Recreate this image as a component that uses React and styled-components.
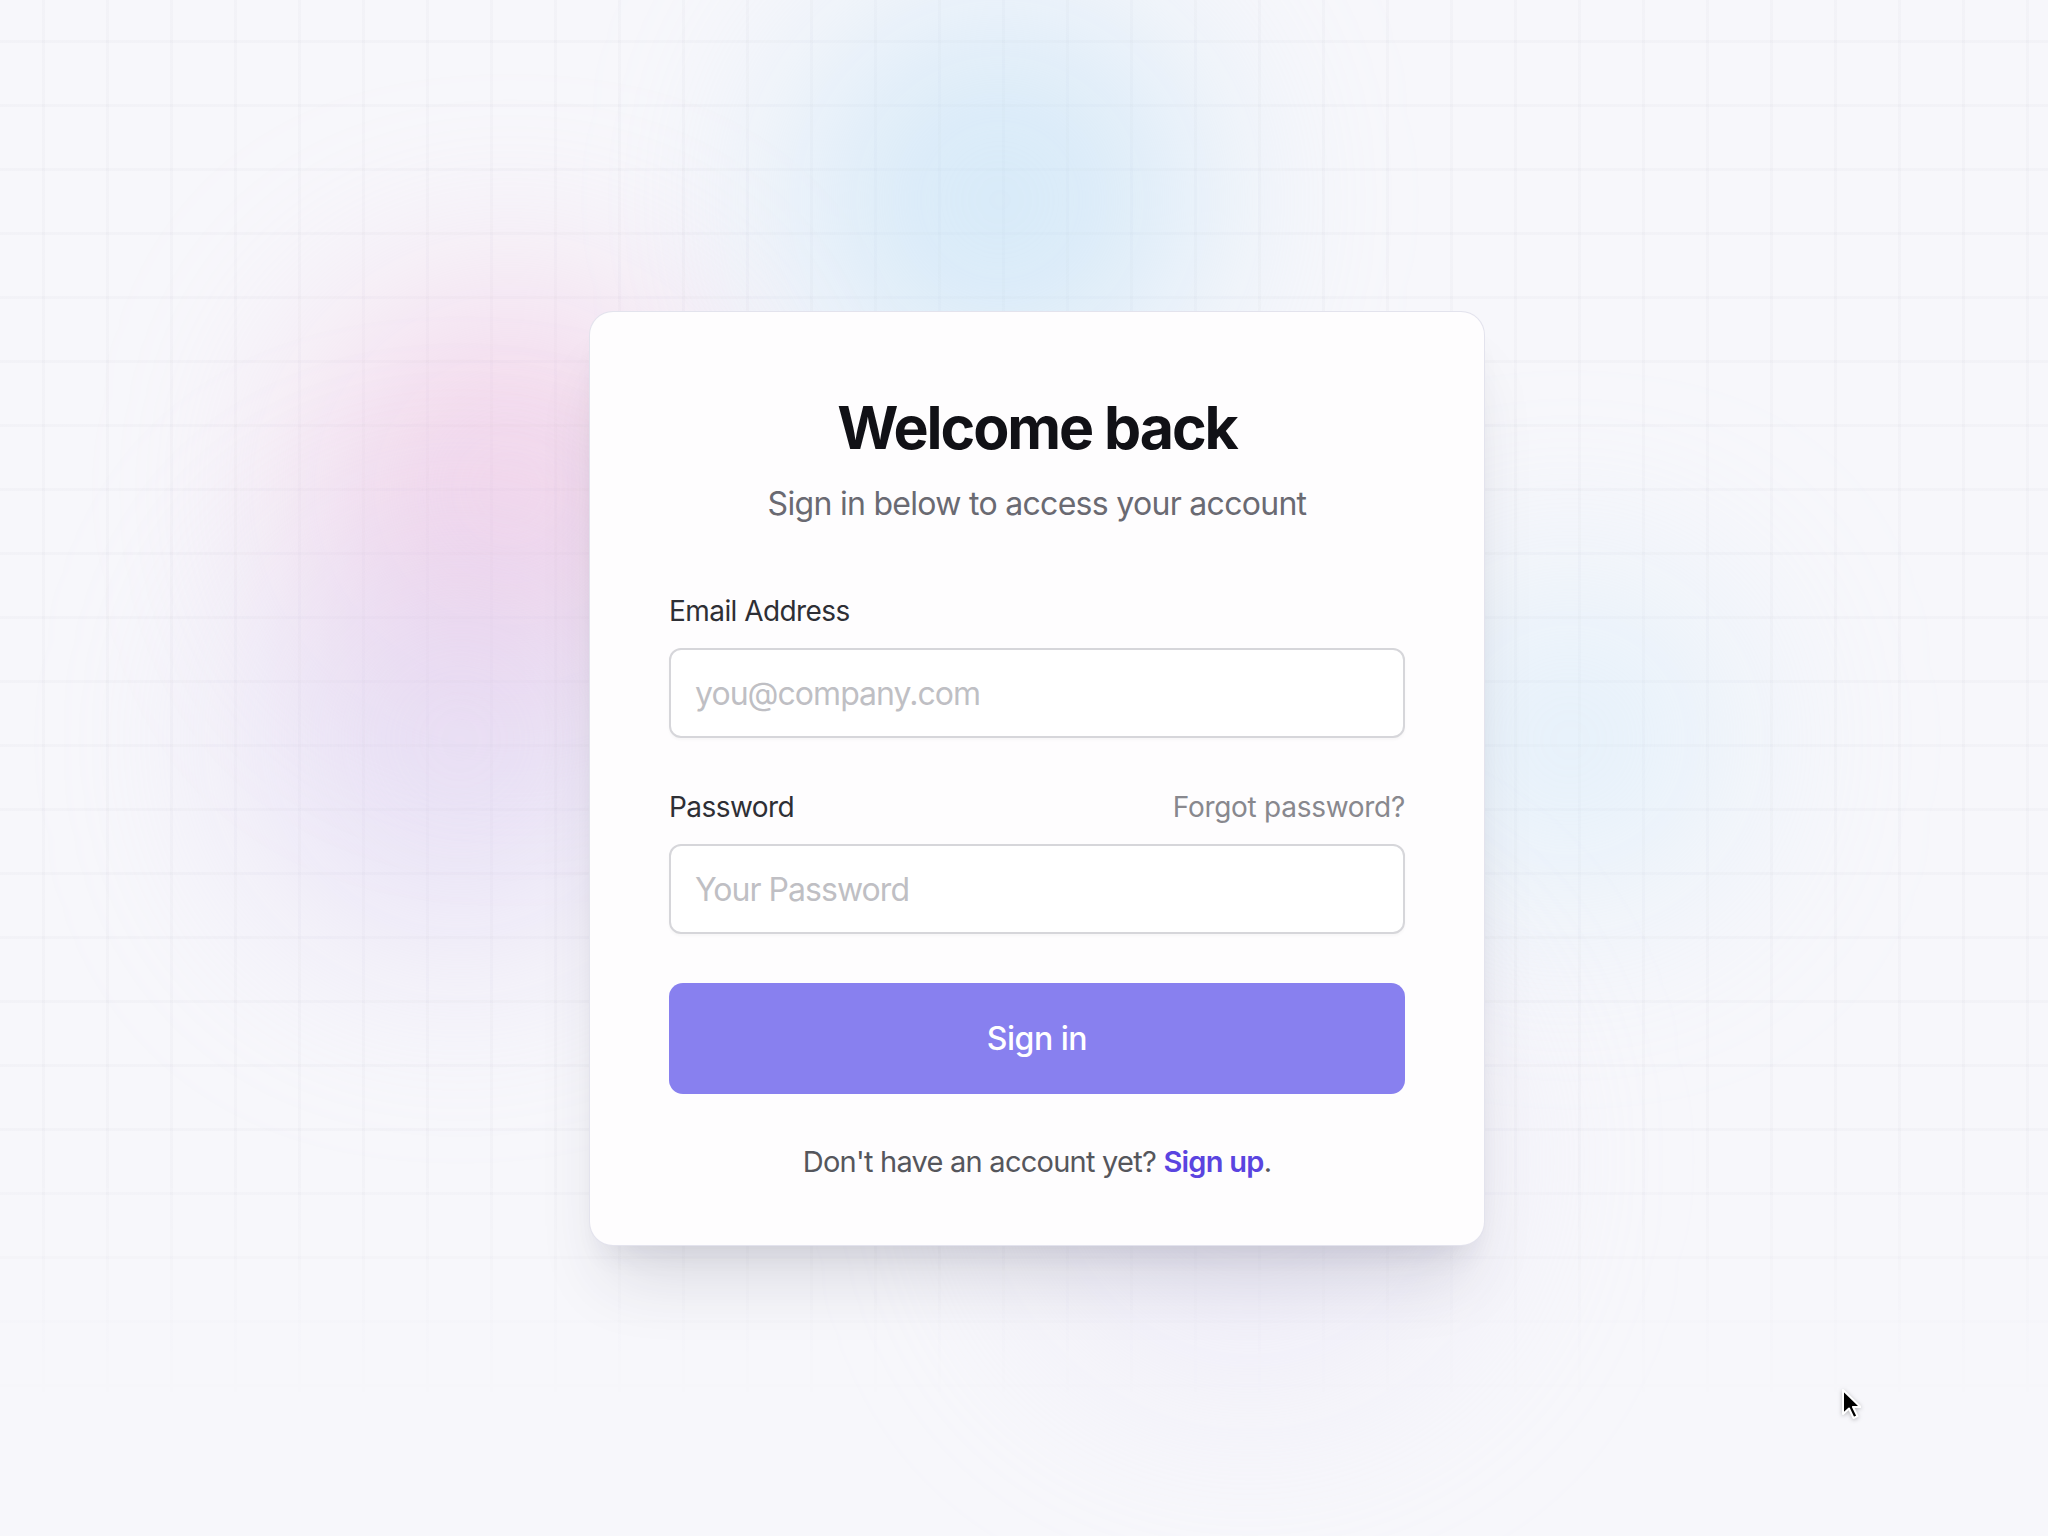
import React from "react";
import styled, { createGlobalStyle } from "styled-components";

const GlobalStyle = createGlobalStyle`
  html, body {
    margin: 0;
    padding: 0;
    background: #f7f7fb;
  }
  body {
    font-family: Inter, "Noto Sans", "Liberation Sans", sans-serif;
    -webkit-font-smoothing: antialiased;
  }
  * {
    box-sizing: border-box;
  }
`;

const App = () => {
  return (
    <>
      <GlobalStyle />
      <Page>
        <Backdrop>
          <Grid />
          <Blob $x={510} $y={490} $size={400} $color="rgba(240, 185, 220, 0.52)" />
          <Blob $x={460} $y={740} $size={420} $color="rgba(215, 200, 240, 0.45)" />
          <Blob $x={1000} $y={200} $size={400} $color="rgba(185, 222, 245, 0.55)" />
          <Blob $x={1570} $y={740} $size={320} $color="rgba(200, 230, 250, 0.42)" />
          <Blob $x={1250} $y={1160} $size={460} $color="rgba(228, 222, 246, 0.4)" />
        </Backdrop>

        <Card>
          <Header>
            <Title>Welcome back</Title>
            <Subtitle>Sign in below to access your account</Subtitle>
          </Header>

          <Form onSubmit={(e) => e.preventDefault()}>
            <Field>
              <LabelRow>
                <Label htmlFor="email">Email Address</Label>
              </LabelRow>
              <Input id="email" type="email" placeholder="you@company.com" />
            </Field>

            <Field>
              <LabelRow>
                <Label htmlFor="password">Password</Label>
                <Forgot href="#">Forgot password?</Forgot>
              </LabelRow>
              <Input id="password" type="password" placeholder="Your Password" />
            </Field>

            <SubmitButton type="submit">Sign in</SubmitButton>
          </Form>

          <Footer>
            Don't have an account yet? <SignUp href="#">Sign up</SignUp>.
          </Footer>
        </Card>

        <Cursor viewBox="0 0 20 32" width="20" height="32">
          <path
            d="M2 2 L2 26 L8 20.5 L12.5 30 L16.5 28.2 L12 19 L19.5 19 Z"
            fill="#000"
            stroke="#fff"
            strokeWidth="2"
            strokeLinejoin="round"
          />
        </Cursor>
      </Page>
    </>
  );
};

const Page = styled.main`
  position: relative;
  min-height: 100vh;
  display: flex;
  align-items: center;
  justify-content: center;
  padding: 21px 0 0 26px;
  overflow: hidden;
`;

const Backdrop = styled.div`
  position: absolute;
  inset: 0;
  pointer-events: none;
`;

const Grid = styled.div`
  position: absolute;
  inset: 0;
  background-image: linear-gradient(
      to right,
      rgba(60, 60, 90, 0.022) 3px,
      transparent 3px
    ),
    linear-gradient(to bottom, rgba(60, 60, 90, 0.022) 3px, transparent 3px);
  background-size: 64px 64px;
  background-position: 42px 40px;
  mask-image: linear-gradient(to bottom, #000 0%, #000 76%, transparent 92%);
`;

const Blob = styled.div`
  position: absolute;
  left: ${(p) => p.$x - p.$size / 2}px;
  top: ${(p) => p.$y - p.$size / 2}px;
  width: ${(p) => p.$size}px;
  height: ${(p) => p.$size}px;
  border-radius: 50%;
  background: ${(p) => p.$color};
  filter: blur(100px);
`;

const Card = styled.section`
  position: relative;
  width: 896px;
  background: #fefdfe;
  border-radius: 24px;
  border: 1px solid rgba(220, 220, 232, 0.8);
  padding: 80px 79px 63px;
  box-shadow: 0 50px 70px -20px rgba(40, 40, 70, 0.14),
    0 20px 30px -16px rgba(40, 40, 70, 0.1);
`;

const Header = styled.div`
  display: flex;
  flex-direction: column;
  align-items: center;
  gap: 12px;
`;

const Title = styled.h1`
  margin: 0;
  font-size: 59px;
  line-height: 72px;
  font-weight: 700;
  letter-spacing: -0.035em;
  color: #111116;
`;

const Subtitle = styled.p`
  margin: 0;
  font-size: 32px;
  line-height: 56px;
  letter-spacing: -0.022em;
  color: #6a6a72;
`;

const Form = styled.form`
  display: flex;
  flex-direction: column;
  gap: 49px;
  margin-top: 59px;
`;

const Field = styled.div`
  display: flex;
  flex-direction: column;
  gap: 17px;
`;

const LabelRow = styled.div`
  display: flex;
  align-items: center;
  justify-content: space-between;
  height: 40px;
`;

const Label = styled.label`
  font-size: 28px;
  font-weight: 400;
  letter-spacing: -0.02em;
  color: #2e2f35;
`;

const Forgot = styled.a`
  font-size: 28px;
  letter-spacing: -0.01em;
  color: #88888e;
  text-decoration: none;
`;

const Input = styled.input`
  width: 100%;
  height: 90px;
  padding: 0 24px;
  border: 2px solid #d6d6da;
  border-radius: 12px;
  background: #fff;
  font-family: inherit;
  font-size: 32px;
  letter-spacing: -0.03em;
  color: #111;
  outline: none;
  box-shadow: 0 2px 3px rgba(0, 0, 0, 0.03);

  &::placeholder {
    color: #bfbfc4;
  }
`;

const SubmitButton = styled.button`
  height: 111px;
  border: none;
  border-radius: 14px;
  background: #8880ef;
  color: #fff;
  font-family: inherit;
  font-size: 32px;
  font-weight: 500;
  letter-spacing: -0.015em;
  cursor: pointer;
`;

const Footer = styled.p`
  margin: 48px 0 0;
  text-align: center;
  font-size: 29px;
  line-height: 40px;
  letter-spacing: -0.026em;
  color: #55565c;
`;

const SignUp = styled.a`
  color: #5a44e0;
  font-weight: 600;
  text-decoration: none;
`;

const Cursor = styled.svg`
  position: absolute;
  left: 1841px;
  top: 1388px;
  filter: drop-shadow(0 1px 2px rgba(0, 0, 0, 0.25));
`;

export default App;
